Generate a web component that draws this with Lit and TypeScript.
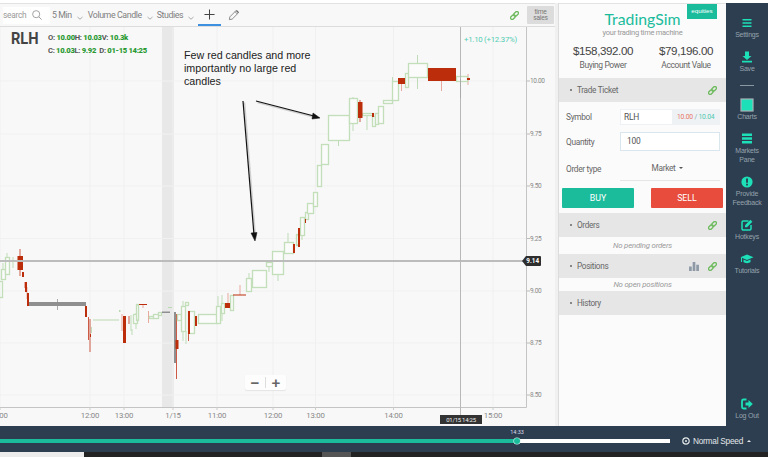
import { LitElement, html, css, svg } from "lit";
import { customElement } from "lit/decorators.js";

type C = [string, number, number, number, number];
// hollow green bodies, red bodies and gray bodies, in page coordinates
const hollow: number[][] = [
  [-1,2,280,296],[1,5,268,278],[5,9,256,273],[133,137,313,322],[136,138,303,319],
  [149,153,315,317],[153,158,313,317],[158,161,311,314],[177,181,313,319],[181,185,305,330],[185,188,301,304],
  [188,194,310,332],[198,217,313,322],[216,220,305,322],[221,224,302,312],[230,233,294,309],[246,251,277,290],
  [252,266,269,286],[266,272,261,265],[272,283,250,273],[284,293,241,252],[296,298,233,244],[300,304,216,234],
  [305,308,211,218],[307,313,202,212],[313,317,191,205],[317,321,164,185],[321,328,143,163],[328,349,114,139],
  [349,357,97,122],[362,373,112,114],[372,375,115,125],[375,378,112,123],[378,383,105,122],[383,392,99,102],
  [392,398,80,99],[405,408,72,86],[408,427,62,76],[456,467,75,80],
];
const red: number[][] = [
  [17.5,23,255,269],[22,24,271,276],[25,27,281,291],[27,29,292,305],[85,87,305,316],[90,91,333,336],
  [123,126,315,342],[188,190,310,333],[195,197,315,325],[175.5,178.5,339,348],[225,230,302,307],[233,246,293.5,294.5],
  [293,295,243,252],[298,300,227,246],[305,306,218,222],[358,362.5,101,117],[398,405,77,83],[428,456,67,80],[467,470,77,79],
  [139,147,303,304],[372,374,112,116],
];
const gray: number[][] = [[29,86,301,305],[174,176,311,362],[162,170,310.5,312]];
const wicks: C[] = [
  ["g",3,262,268],["g",7,252,256],["g",13,256,267],["r",20,248,275],["lr",24.5,281,287],["lr",27,286,298],
  ["gr",57.5,298,309],["r",88.5,316,339],["r",90,318,351],["g",91.5,326,332],["lr",122,313,330],["g",131,314,330],
  ["r",129,315,323],["g",132,328,334],["g",136,312,328],["lr",143,303,307],["lr",148.5,310,322],["r",176.5,313,378],
  ["g",183,300,340],["g",186,330,343],["r",188.5,333,340],["g",218,295,322],["g",222,294,320],["lr",228,292,302],
  ["lr",240,284,294],["g",249,272,277],["g",269,265,271],["g",278,273,280],["g",288,232,241],["g",302,234,239],
  ["g",338.5,139,145],["g",353,122,130],["g",353,96,97],["r",360,99,121],["g",367,114,129],["lr",401.5,83,90],
  ["g",417.5,54,62],["g",417.5,76,88],["lr",441.5,80,90],["lr",468,73,84],["g",392.5,76,80],
];
const dashes: number[][] = [[119,120.5,309,311],[168,172,306,307],[93,119,318.5,319.5]];
const yTicks: [number, string][] = [[80,"10.00"],[133,"9.75"],[185,"9.50"],[237.5,"9.25"],[290,"9.00"],[342,"8.75"],[394,"8.50"]];
const xTicks: [number, number, string][] = [[0,3.5,"00"],[90,90,"12:00"],[124,124,"13:00"],[173,173,"1/15"],[217,217,"11:00"],[273,273,"12:00"],[315.5,315.5,"13:00"],[393.5,393.5,"14:00"],[493,493,"15:00"]];

const linkIcon = html`<svg class="link" viewBox="0 0 10 10"><g fill="none" stroke="currentColor" stroke-width="1.5" transform="rotate(-45 5 5)"><rect x="-0.5" y="3.2" width="6" height="3.6" rx="1.8"/><rect x="4.5" y="3.2" width="6" height="3.6" rx="1.8"/></g></svg>`;
const chev = html`<svg class="chev" viewBox="0 0 6 4"><path d="M.5 1 3 3.2 5.5 1" fill="none" stroke="#999" stroke-width=".8"/></svg>`;

@customElement("app-root")
export class AppRoot extends LitElement {
  static styles = css`
    :host { display: block; width: 768px; height: 457px; overflow: hidden; background: #fff; font-family: "Liberation Sans", Arial, sans-serif; }
    .page { display: flex; flex-direction: column; height: 457px; padding-top: 3px; box-sizing: border-box; }
    .main { display: flex; height: 423px; }
    .left { width: 555px; display: flex; flex-direction: column; background: #f8f8f8; border-top: 1px solid #e2e2e2; box-sizing: border-box; }
    .toolbar { height: 22px; display: flex; align-items: center; border-bottom: 1px solid #ddd; font: 8.8px Roboto, sans-serif; letter-spacing: -.4px; color: #808080; flex: none; position: relative; }
    .search { width: 47px; margin-left: 3px; height: 17px; background: #fff; display: flex; align-items: center; gap: 6px; flex: none; font-size: 8.4px; letter-spacing: -.3px; color: #999; }
    .mag { width: 10px; height: 10px; }
    .tool { display: flex; align-items: center; }
    .chev { width: 6px; height: 4px; margin: 5px 0 0 5px; }
    .tool.t1 { margin-left: 2px; } .tool.t2 { margin-left: 5px; } .tool.t3 { margin-left: 4px; }
    .plus { width: 23px; height: 21px; margin-left: 4px; border-bottom: 2px solid #3d8fe0; box-sizing: border-box; display: flex; align-items: center; justify-content: center; flex: none; }
    .plus svg { width: 11px; height: 11px; }
    .pencil { width: 12px; height: 12px; margin-left: 7px; }
    .tb-link { margin-left: auto; color: #6fbb5f; display: flex; }
    .link { width: 9px; height: 9px; }
    .ts { width: 27px; height: 18px; margin: 0 1px 0 8px; background: #dcdcdc; border-radius: 1px; color: #777; font-size: 6.6px; letter-spacing: -.2px; line-height: 6.5px; text-align: center; display: flex; align-items: center; justify-content: center; }
    .chart { position: relative; flex: 1; overflow: hidden; }
    .chart > svg { display: block; width: 555px; height: 400px; }
    .axis { font: 6.5px Roboto, sans-serif; letter-spacing: -.34px; fill: #888; }
    .xaxis { font: 7.8px Roboto, sans-serif; letter-spacing: -.22px; fill: #888; text-anchor: middle; }
    .sym { position: absolute; left: 11px; top: 2px; font: bold 17px/18px "Roboto", sans-serif; color: #444; transform: scaleX(.86); transform-origin: left; }
    .ohlc { position: absolute; left: 48px; top: 4px; font: bold 7.6px/13px Roboto, sans-serif; letter-spacing: -.3px; color: #555; white-space: nowrap; }
    .ohlc b { color: #2b9a33; }
    .pct { position: absolute; left: 464px; top: 8px; font: 7.8px/10px Roboto, sans-serif; letter-spacing: -.24px; color: #52cdb4; }
    .note { position: absolute; left: 184px; top: 22px; font-size: 10.7px; line-height: 12.8px; color: #222; white-space: nowrap; }
    .zoom { position: absolute; left: 245px; top: 348px; width: 41px; height: 15px; background: #fdfdfd; border-radius: 2px; box-shadow: 0 1px 1px #e4e4e4; display: flex; align-items: center; color: #666; font: bold 15px/15px "Liberation Sans", sans-serif; }
    .zoom span { flex: 1; text-align: center; }
    .zoom span + span { border-left: 1px solid #ddd; height: 11px; line-height: 11px; }
    .tag { position: absolute; left: 522px; top: 229px; width: 19px; height: 10px; background: #2e2e2e; color: #fff; font: bold 6.3px/10px Roboto, sans-serif; text-align: right; padding-right: 2px; box-sizing: border-box; clip-path: polygon(4px 0, 100% 0, 100% 100%, 4px 100%, 0 50%); border-radius: 1px; }
    .date { position: absolute; left: 440px; top: 388px; width: 42px; height: 9px; background: #333; color: #eee; font: 6px/9px Roboto, sans-serif; letter-spacing: -.26px; text-align: center; white-space: nowrap; }
    .gutter { width: 4px; flex: none; background: #f0f0f0; border-right: 1px solid #dcdcdc; box-sizing: border-box; }
    .side { width: 167px; flex: none; background: #fbfbfb; border-top: 1px solid #e2e2e2; box-sizing: border-box; position: relative; color: #555; display: flex; flex-direction: column; }
    .badge { position: absolute; right: 9px; top: 0; width: 30px; height: 15px; background: #1abc9c; color: #fff; font-size: 6.2px; line-height: 13px; text-align: center; }
    .title { margin-top: 6px; text-align: center; font: 15.8px/18px Lato, sans-serif; color: #1abc9c; }
    .tagline { text-align: center; font: 7.5px/10px Roboto, sans-serif; letter-spacing: -.28px; color: #999; }
    .stats { display: grid; grid-template-columns: 83px 83px; margin: 5px 0 0 2.5px; text-align: center; height: 32px; }
    .stats .v { font: 11.6px/16px "Liberation Sans", sans-serif; letter-spacing: -.4px; color: #444; }
    .stats .l { font: 8.5px/13px Roboto, sans-serif; letter-spacing: -.4px; color: #666; }
    .head { height: 24px; background: #e6e6e6; display: flex; align-items: center; padding: 0 9px 0 11px; font: 8.2px Roboto, sans-serif; letter-spacing: -.3px; color: #666; flex: none; }
    .dot { width: 2px; height: 2px; background: #666; border-radius: 50%; margin-right: 5px; }
    .head .link { color: #6fbb5f; margin-left: auto; }
    .bars { margin-left: auto; margin-right: 9px; width: 10px; height: 9px; }
    .bars + .link { margin-left: 0; }
    .head.first { margin-top: 3px; }
    .row { display: flex; align-items: center; padding-left: 7px; font: 8.3px Roboto, sans-serif; letter-spacing: -.3px; color: #666; }
    .row label { width: 54px; flex: none; }
    .symbol { margin-top: 7px; height: 16px; }
    .combo { width: 100px; height: 16px; background: #eef2f4; display: flex; align-items: center; box-sizing: border-box; padding: 1px; }
    .inp { background: #fff; font: 8.4px Roboto, sans-serif; letter-spacing: -.15px; color: #555; box-sizing: border-box; }
    .combo .inp { width: 51px; height: 14px; line-height: 14px; padding-left: 3px; }
    .quote { font: 6.8px Roboto, sans-serif; letter-spacing: -.23px; margin-left: 5px; color: #8aa; white-space: nowrap; }
    .quote .b { color: #e8776b; } .quote .a { color: #4fc9b0; }
    .qty { margin-top: 7px; height: 19px; }
    .qty .inp { width: 100px; height: 19px; border: 1px solid #d9e6ee; line-height: 17px; padding-left: 6px; }
    .otype { margin-top: 6px; height: 24px; }
    .select { width: 100px; height: 24px; border-bottom: 1px solid #e5e5e5; box-sizing: border-box; display: flex; align-items: center; justify-content: center; gap: 3px; padding: 0 6px 1px 0; }
    .caret { width: 0; height: 0; border: 2.5px solid transparent; border-top-color: #555; border-bottom: 0; }
    .btns { display: flex; justify-content: space-between; margin: 7px 3px 5px 3px; }
    .btn { width: 72px; height: 20px; border-radius: 1px; color: #fff; font: 8.8px/20px Roboto, sans-serif; text-align: center; background: #1abc9c; }
    .btn.sell { background: #e74c3c; }
    .empty { text-align: center; font: italic 7.8px Roboto, sans-serif; letter-spacing: -.18px; color: #999; display: flex; align-items: center; justify-content: center; flex: none; }
    .e1 { height: 17px; } .e2 { height: 13px; }
    .rail { width: 42px; flex: none; background: #2c3e50; display: flex; flex-direction: column; align-items: center; padding: 13px 0 6px; box-sizing: border-box; gap: 11px; color: #97a3ad; font-size: 7px; letter-spacing: -.2px; line-height: 9px; text-align: center; }
    .item { display: flex; flex-direction: column; align-items: center; }
    .item svg { width: 14px; height: 14px; display: block; }
    .sep { width: 14px; height: 1px; background: #8b97a2; margin: 1px 0; }
    .out { margin-top: auto; }
    .bottom { height: 26px; background: #2c3e50; position: relative; flex: none; display: flex; align-items: center; }
    .track { width: 670px; height: 3.5px; background: #fff; position: relative; flex: none; margin-top: 4px; }
    .fill { width: 517px; height: 100%; background: #1abc9c; }
    .knob { position: absolute; left: 514px; top: -1.25px; width: 6px; height: 6px; border-radius: 50%; background: #1abc9c; box-shadow: 0 0 0 .6px #d5f3ec; }
    .tick { position: absolute; left: 507px; top: -11px; width: 20px; text-align: center; color: #dde; font: 5.5px/8px Roboto, sans-serif; }
    .speed { margin-left: 12px; display: flex; align-items: center; gap: 3px; color: #e4e8ea; font: 8.3px "Liberation Sans", sans-serif; letter-spacing: -.25px; white-space: nowrap; margin-top: 3px; }
    .speed svg { width: 8px; height: 8px; }
    .caret-up { width: 0; height: 0; border: 2.5px solid transparent; border-bottom-color: #e4e8ea; border-top: 0; margin-left: 1px; }
    .strip { flex: 1; background: #232323; display: flex; }
    .s1 { width: 84px; background: #ececec; }
    .s2 { width: 29px; background: #555; margin-left: 238px; }
  `;

  plot() {
    const wc: Record<string, string> = { g: "#bfdcb8", r: "#cc5a44", lr: "#e8a99e", gr: "#aaa" };
    return svg`
      <rect x="162" y="26" width="12" height="380" fill="#e8e8e8"/>
      ${yTicks.map(([y]) => svg`<line x1="0" x2="526" y1=${y} y2=${y} stroke="#f1f1f1"/>`)}
      ${xTicks.map(([x]) => svg`<line x1=${x} x2=${x} y1="26" y2="406" stroke="#f0f0f0"/>`)}
      <path d="M526.5 26V406.500H0" fill="none" stroke="#c4c4c4"/>
      ${yTicks.map(([y, t]) => svg`<line x1="527" x2="530" y1=${y} y2=${y} stroke="#bbb"/><text class="axis" x="530" y=${y + 2}>${t}</text>`)}
      ${xTicks.map(([x, lx, t]) => svg`<line x1=${x} x2=${x} y1="406" y2="409" stroke="#ccc"/><text class="xaxis" x=${lx} y="417">${t}</text>`)}
      ${wicks.map(([c, x, a, b]) => svg`<line x1=${x} x2=${x} y1=${a} y2=${b} stroke=${wc[c]} stroke-width="1"/>`)}
      ${hollow.map(([a, b, t, u]) => svg`<rect x=${a + 0.5} y=${t + 0.5} width=${b - a} height=${u - t} fill="#fbfbfb" stroke="#c2dfba" stroke-width="1.3"/>`)}
      ${dashes.map(([a, b, t, u]) => svg`<rect x=${a} y=${t} width=${b - a} height=${u - t} fill="#b9d9b1"/>`)}
      ${gray.map(([a, b, t, u]) => svg`<rect x=${a} y=${t} width=${b - a} height=${u - t} fill="#8f8f8f"/>`)}
      ${red.map(([a, b, t, u]) => svg`<rect x=${a} y=${t} width=${b - a} height=${u - t} fill="#bb2d0b"/>`)}
      <line x1="0" x2="523" y1="260" y2="260" stroke="#bcbcbc" stroke-width="2"/>
      <line x1="460.5" x2="460.5" y1="26" y2="414" stroke="#b8b8b8" stroke-width="1"/>
      <line x1="460.5" x2="460.5" y1="78" y2="97" stroke="#aaa" stroke-width="1"/>
      <g stroke="#777" stroke-width="1.6" opacity=".3" fill="none" transform="translate(1.5 1.5)">
        <path d="M243 100 254 236"/><path d="M256 100 316 115.500"/>
      </g>
      <g stroke="#111" stroke-width="1.2" fill="#111">
        <path d="M243 100 254 234" fill="none"/><path d="M256 100 314 115" fill="none"/>
        <path d="M251 232 257 231.500 255 240Z" stroke-width=".5"/><path d="M313 112 320 117 312 118Z" stroke-width=".5"/>
      </g>`;
  }

  render() {
    return html`<div class="page">
      <div class="main">
        <div class="left">
          <div class="toolbar">
            <div class="search">search
              <svg class="mag" viewBox="0 0 11 11"><circle cx="4.6" cy="4.6" r="3.9" fill="none" stroke="#999"/><path d="M7.5 7.5 10.6 10.6" stroke="#999"/></svg>
            </div>
            <div class="tool t1">5 Min${chev}</div>
            <div class="tool t2">Volume Candle${chev}</div>
            <div class="tool t3">Studies${chev}</div>
            <div class="plus"><svg viewBox="0 0 12 12"><path d="M6 .5V11.500M.5 6H11.500" stroke="#444" stroke-width="1.1"/></svg></div>
            <svg class="pencil" viewBox="0 0 13 13"><path d="M1.500 11.500 2 8.500 8.700 1.800 11.200 4.300 4.500 11Z M7.600 2.900 10.100 5.400" fill="none" stroke="#777" stroke-width=".9"/><path d="M8.700 1.800 11.200 4.300 12 3.400 9.600 1Z" fill="#666"/></svg>
            <div class="tb-link">${linkIcon}</div>
            <div class="ts"><div>time<br />sales</div></div>
          </div>
          <div class="chart">
            <svg viewBox="0 26 555 400">${this.plot()}</svg>
            <div class="sym">RLH</div>
            <div class="ohlc">O: <b>10.00</b>H: <b>10.03</b>V: <b>10.3k</b><br />C: <b>10.03</b>L: <b>9.92</b>&nbsp; D: <b>01-15 14:25</b></div>
            <div class="pct">+1.10 (+12.37%)</div>
            <div class="note">Few red candles and more<br />importantly no large red<br />candles</div>
            <div class="zoom"><span>−</span><span>+</span></div>
            <div class="tag">9.14</div>
            <div class="date">01/15 14:25</div>
          </div>
        </div>
        <div class="gutter"></div>
        <div class="side">
          <div class="badge">equities</div>
          <div class="title">TradingSim</div>
          <div class="tagline">your trading time machine</div>
          <div class="stats">
            <div><div class="v">$158,392.00</div><div class="l">Buying Power</div></div>
            <div><div class="v">$79,196.00</div><div class="l">Account Value</div></div>
          </div>
          <div class="head first"><i class="dot"></i>Trade Ticket${linkIcon}</div>
          <div class="row symbol"><label>Symbol</label>
            <div class="combo"><div class="inp">RLH</div><div class="quote"><span class="b">10.00</span> / <span class="a">10.04</span></div></div>
          </div>
          <div class="row qty"><label>Quantity</label><div class="inp">100</div></div>
          <div class="row otype"><label>Order type</label><div class="select">Market <i class="caret"></i></div></div>
          <div class="btns"><div class="btn">BUY</div><div class="btn sell">SELL</div></div>
          <div class="head"><i class="dot"></i>Orders${linkIcon}</div>
          <div class="empty e1">No pending orders</div>
          <div class="head"><i class="dot"></i>Positions
            <svg class="bars" viewBox="0 0 11 10"><path d="M0 5h3v5H0zM4 0h3v10H4zM8 3h3v7H8z" fill="#8d9aa5"/></svg>${linkIcon}</div>
          <div class="empty e2">No open positions</div>
          <div class="head"><i class="dot"></i>History</div>
        </div>
        <div class="rail">
          <div class="item"><svg viewBox="0 0 14 14"><path d="M2.500 3h9v1.600h-9zM2.500 6.200h9v1.600h-9zM2.500 9.400h9V11h-9z" fill="#1de0b8"/></svg>Settings</div>
          <div class="item"><svg viewBox="0 0 14 14"><path d="M5 1.500h4v4.500h2.500L7 10 2.500 6H5zM2 10.800h10V12.500H2z" fill="#1de0b8"/></svg>Save</div>
          <div class="sep"></div>
          <div class="item"><svg viewBox="0 0 14 14"><rect x="1" y="1" width="12" height="12" fill="#1de0b8" stroke="#a8b2ba" stroke-width="1.2"/></svg>Charts</div>
          <div class="item"><svg viewBox="0 0 14 14"><path d="M2 1.500h10v2.400H2zM2 5.300h10v2.400H2zM2 9.100h10v2.400H2z" fill="#1de0b8"/></svg>Markets<br />Pane</div>
          <div class="item"><svg viewBox="0 0 14 14"><circle cx="7" cy="7" r="5.600" fill="#1de0b8"/><path d="M6.100 3.400h1.800v4.400H6.100zM6.100 8.800h1.800v1.700H6.100z" fill="#2c3e50"/></svg>Provide<br />Feedback</div>
          <div class="item"><svg viewBox="0 0 14 14"><path d="M8.500 3H3.200A1.200 1.200 0 0 0 2 4.200v6.600A1.200 1.200 0 0 0 3.200 12h6.600A1.200 1.200 0 0 0 11 10.800V7" fill="none" stroke="#1de0b8" stroke-width="1.500"/><path d="M10.400 1.800 12.400 3.800 7 9.200 5 9.200 5 7.200Z" fill="#1de0b8"/></svg>Hotkeys</div>
          <div class="item"><svg viewBox="0 0 14 14"><path d="M7 2.500 13.500 5.200 7 8 .5 5.200Z" fill="#1de0b8"/><path d="M3.500 7.500V10C5 11.500 9 11.500 10.500 10V7.500L7 9Z" fill="#1de0b8"/><path d="M1.500 5.500V10" stroke="#1de0b8"/></svg>Tutorials</div>
          <div class="item out"><svg viewBox="0 0 14 14"><path d="M6.500 2.500H3.500A1.500 1.500 0 0 0 2 4v6A1.500 1.500 0 0 0 3.500 11.500H6.500" fill="none" stroke="#1de0b8" stroke-width="1.800"/><path d="M5.500 5.500H8.500V3L12.800 7 8.500 11V8.500H5.500Z" fill="#1de0b8"/></svg>Log Out</div>
        </div>
      </div>
      <div class="bottom">
        <div class="track"><div class="fill"></div><div class="knob"></div><div class="tick">14:33</div></div>
        <div class="speed">
          <svg viewBox="0 0 8 8"><circle cx="4" cy="4" r="3.200" fill="none" stroke="#e4e8ea" stroke-width="1.200"/><circle cx="4" cy="4" r="1" fill="#e4e8ea"/></svg>
          Normal Speed <i class="caret-up"></i>
        </div>
      </div>
      <div class="strip"><div class="s1"></div><div class="s2"></div></div>
    </div>`;
  }
}
